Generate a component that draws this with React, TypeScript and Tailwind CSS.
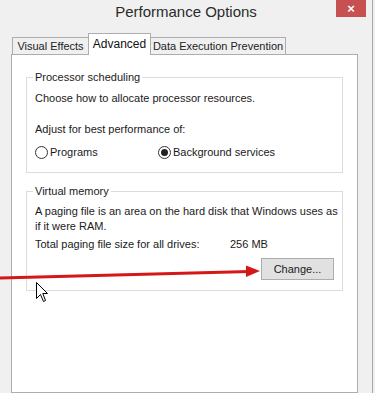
import React from "react";

const font = { fontFamily: '"Liberation Sans", Arial, sans-serif' };

function Radio({ checked }: { checked?: boolean }) {
  return (
    <span className="flex h-[13px] w-[13px] items-center justify-center rounded-full border border-[#333] bg-white">
      {checked && <span className="h-[7px] w-[7px] rounded-full bg-[#222]" />}
    </span>
  );
}

function Tab({ label, width, active }: { label: string; width: string; active?: boolean }) {
  return active ? (
    <div
      className={`relative z-10 -mb-px flex h-[22px] items-center justify-center border border-b-0 border-[#adadad] bg-white pb-[2px] text-[12px] whitespace-nowrap text-[#111] ${width}`}
    >
      {label}
    </div>
  ) : (
    <div
      className={`flex h-[17px] items-center justify-center border border-b-0 border-[#adadad] bg-[#f0f0f0] text-[11px] whitespace-nowrap text-[#222] ${width}`}
    >
      {label}
    </div>
  );
}

export default function App() {
  return (
    <div
      className="relative h-[393px] w-[375px] overflow-hidden bg-[#f0f0f0] text-[11px] text-[#1a1a1a]"
      style={font}
    >
      <div className="flex h-full w-[373px] flex-col border-r border-[#a8a8a8]">
        {/* title bar */}
        <div className="flex h-[33px] justify-center pt-[1px] text-[15px] leading-[22px] text-[#2b2b2b]">
          Performance Options
        </div>
        <div className="absolute right-[9px] top-0 flex h-[17px] w-[30px] items-center justify-center bg-[#c75050] text-[13px] font-bold leading-none text-white">
          ×
        </div>

        {/* tabs */}
        <div className="flex items-end pl-[12px]">
          <Tab label="Visual Effects" width="w-[76px] border-r-0" />
          <Tab label="Advanced" width="w-[63px]" active />
          <Tab label="Data Execution Prevention" width="w-[135px] border-l-0" />
        </div>

        {/* panel */}
        <div className="mr-[14px] ml-[11px] flex-1 border border-[#adadad] bg-white px-[14px] pt-[15px]">
          <fieldset className="border border-[#dcdcdc] pb-[12px] pl-[8px]">
            <legend className="-ml-[2px] px-[2px] leading-[15px]">Processor scheduling</legend>
            <p className="mt-[5px] leading-[16px]">Choose how to allocate processor resources.</p>
            <p className="mt-[15px] leading-[16px]">Adjust for best performance of:</p>
            <div className="mt-[7px] flex items-center leading-[16px]">
              <div className="flex w-[123px] items-center gap-[2px]">
                <Radio />
                <span>Programs</span>
              </div>
              <div className="flex items-center gap-[2px]">
                <Radio checked />
                <span>Background services</span>
              </div>
            </div>
          </fieldset>

          <fieldset className="mt-[11px] border border-[#dcdcdc] pr-[3px] pb-[10px] pl-[8px]">
            <legend className="-ml-[2px] px-[2px] leading-[15px]">Virtual memory</legend>
            <p className="mt-[5px] leading-[15px]">
              A paging file is an area on the hard disk that Windows uses as if it were RAM.
            </p>
            <div className="mt-[2px] flex leading-[16px]">
              <span className="w-[195px]">Total paging file size for all drives:</span>
              <span>256 MB</span>
            </div>
            <div className="mt-[6px] flex justify-end pr-[5px]">
              <div className="flex h-[22px] w-[73px] items-center justify-center border border-[#adadad] bg-[#e1e1e1]">
                Change...
              </div>
            </div>
          </fieldset>
        </div>
      </div>

      {/* annotation arrow */}
      <svg className="absolute left-0 top-[262px]" width="265" height="22" viewBox="0 0 265 22">
        <line x1="0" y1="16" x2="250" y2="9.5" stroke="#d41818" strokeWidth="3" />
        <polygon points="246,3.5 260,9 246,15" fill="#d41818" />
      </svg>

      {/* mouse pointer */}
      <svg className="absolute left-[36px] top-[282px]" width="13" height="21" viewBox="0 0 13 21">
        <path
          d="M0.5 0.5 L0.5 16.5 L4.5 12.5 L7.5 19.5 L9.5 18.5 L6.8 11.5 L11.5 11.5 Z"
          fill="#fff"
          stroke="#000"
          strokeWidth="1"
          strokeLinejoin="miter"
        />
      </svg>
    </div>
  );
}
